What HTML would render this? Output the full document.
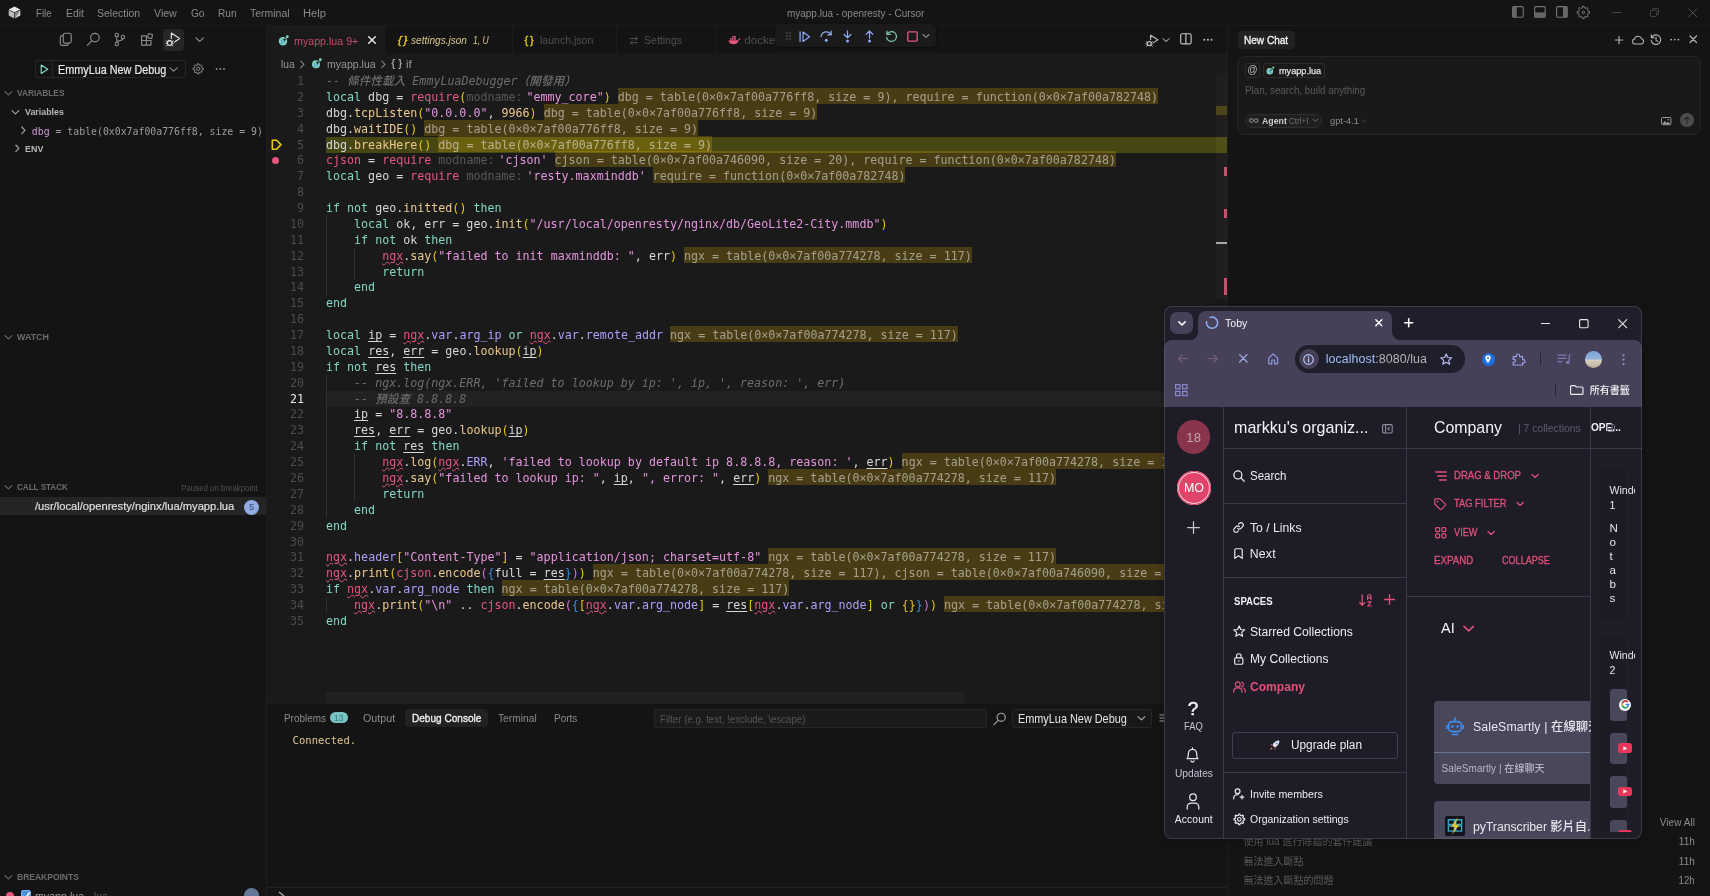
<!DOCTYPE html>
<html lang="zh-Hant"><head><meta charset="utf-8"><title>myapp.lua - openresty - Cursor</title>
<style>
*{box-sizing:border-box;margin:0;padding:0}
html,body{width:1710px;height:896px;overflow:hidden;background:#141414}
body{font-family:"Liberation Sans","Noto Sans CJK TC",sans-serif;font-size:11.7px;color:#8c8c8c;position:relative}
.a{position:absolute;white-space:nowrap}
.t{position:absolute;white-space:nowrap;line-height:16px;transform:translateY(-50%)}
svg{position:absolute;overflow:visible}
.mono{font-family:"DejaVu Sans Mono","Liberation Mono","Noto Sans CJK TC",monospace}
/* code */
#code{position:absolute;left:0;top:0;width:1227px;height:703px;overflow:hidden}
.ln{position:absolute;left:326px;height:15.88px;line-height:15.88px;white-space:pre;font-family:"DejaVu Sans Mono","Liberation Mono","Noto Sans CJK TC",monospace;font-size:11.66px;color:#d6d6dd;letter-spacing:0}
.num{position:absolute;left:268px;width:36px;text-align:right;height:15.88px;line-height:15.88px;font-family:"DejaVu Sans Mono","Liberation Mono",monospace;font-size:11.66px;color:#4c4b51}
.k{color:#83d6c5}.g{color:#e5567f}.gw{color:#e5567f;text-decoration:underline wavy #e5567f .75px;text-underline-offset:1.2px}
.f{color:#ebc88d}.s{color:#e394dc}.n{color:#ebc88d}.p{color:#aaa0fa}
.c{color:#6d6d6d;font-style:italic;font-weight:500}
.u{text-decoration:underline;text-underline-offset:2px;text-decoration-thickness:1px}
.h{display:inline-block;width:60.1px;color:#585858}
.b1{color:#e6c619}.b2{color:#d670d6}.b3{color:#2f8fe6}
.iv{background:rgba(255,200,0,.2);color:rgba(255,255,255,.5);padding:2px 0 0}
.ig{position:absolute;width:1px;background:#303030}
#root{position:absolute;left:0;top:0;width:1710px;height:896px;will-change:transform}
</style></head><body><div id="root">
<!-- backgrounds -->
<div class="a" style="left:267px;top:26px;width:960px;height:677px;background:#1a1a1a"></div>
<div class="a" style="left:266px;top:26px;width:1px;height:870px;background:#1d1d1d"></div>
<div class="a" style="left:1227px;top:26px;width:1px;height:870px;background:#1d1d1d"></div>
<div class="a" style="left:0;top:25px;width:1710px;height:1px;background:#1b1b1b"></div>
<!-- tab strip -->
<div class="a" style="left:384px;top:26px;width:843px;height:27px;background:#141414"></div>
<div class="a" style="left:384px;top:26px;width:1px;height:27px;background:#1b1b1b"></div>
<div class="a" style="left:512px;top:26px;width:1px;height:27px;background:#1b1b1b"></div>
<div class="a" style="left:616px;top:26px;width:1px;height:27px;background:#1b1b1b"></div>
<div class="a" style="left:716px;top:26px;width:1px;height:27px;background:#1b1b1b"></div>
<!-- bottom panel -->
<div class="a" style="left:267px;top:703px;width:960px;height:193px;background:#141414"></div>
<div class="a" style="left:267px;top:703px;width:960px;height:1px;background:#1d1d1d"></div>
<div id="code">
<div class="a" style="left:326px;top:136.52px;width:901px;height:16.4px;background:rgba(255,255,0,.2)"></div>
<div class="a" style="left:326px;top:390.90px;width:890px;height:16px;background:#222222"></div>
<div class="ig" style="left:326px;top:216.22px;height:79.40px"></div>
<div class="ig" style="left:354px;top:247.98px;height:31.76px"></div>
<div class="ig" style="left:326px;top:375.02px;height:142.92px"></div>
<div class="ig" style="left:354px;top:454.42px;height:47.64px"></div>
<div class="ig" style="left:326px;top:597.34px;height:15.88px"></div>
<div class="num" style="top:74.00px">1</div>
<div class="ln" style="top:74.00px"><span class="c">-- 條件性載入 EmmyLuaDebugger（開發用）</span></div>
<div class="num" style="top:89.88px">2</div>
<div class="ln" style="top:89.88px"><span class="k">local</span> dbg = <span class="g">require</span><span class="b1">(</span><span class="h">modname:</span><span class="s">"emmy_core"</span><span class="b1">)</span> <span class="iv">dbg = table(0×0×7af00a776ff8, size = 9), require = function(0×0×7af00a782748)</span></div>
<div class="num" style="top:105.76px">3</div>
<div class="ln" style="top:105.76px">dbg.<span class="f">tcpListen</span><span class="b1">(</span><span class="s">"0.0.0.0"</span>, <span class="n">9966</span><span class="b1">)</span> <span class="iv">dbg = table(0×0×7af00a776ff8, size = 9)</span></div>
<div class="num" style="top:121.64px">4</div>
<div class="ln" style="top:121.64px">dbg.<span class="f">waitIDE</span><span class="b1">()</span> <span class="iv">dbg = table(0×0×7af00a776ff8, size = 9)</span></div>
<div class="num" style="top:137.52px">5</div>
<div class="ln" style="top:137.52px">dbg.<span class="f">breakHere</span><span class="b1">()</span> <span class="iv">dbg = table(0×0×7af00a776ff8, size = 9)</span></div>
<div class="num" style="top:153.40px">6</div>
<div class="ln" style="top:153.40px"><span class="g">cjson</span> = <span class="g">require</span> <span class="h">modname:</span><span class="s">'cjson'</span> <span class="iv">cjson = table(0×0×7af00a746090, size = 20), require = function(0×0×7af00a782748)</span></div>
<div class="num" style="top:169.28px">7</div>
<div class="ln" style="top:169.28px"><span class="k">local</span> geo = <span class="g">require</span> <span class="h">modname:</span><span class="s">'resty.maxminddb'</span> <span class="iv">require = function(0×0×7af00a782748)</span></div>
<div class="num" style="top:185.16px">8</div>
<div class="num" style="top:201.04px">9</div>
<div class="ln" style="top:201.04px"><span class="k">if</span> <span class="k">not</span> geo.<span class="f">initted</span><span class="b1">()</span> <span class="k">then</span></div>
<div class="num" style="top:216.92px">10</div>
<div class="ln" style="top:216.92px">    <span class="k">local</span> ok, err = geo.<span class="f">init</span><span class="b1">(</span><span class="s">"/usr/local/openresty/nginx/db/GeoLite2-City.mmdb"</span><span class="b1">)</span></div>
<div class="num" style="top:232.80px">11</div>
<div class="ln" style="top:232.80px">    <span class="k">if</span> <span class="k">not</span> ok <span class="k">then</span></div>
<div class="num" style="top:248.68px">12</div>
<div class="ln" style="top:248.68px">        <span class="gw">ngx</span>.<span class="f">say</span><span class="b1">(</span><span class="s">"failed to init maxminddb: "</span>, err<span class="b1">)</span> <span class="iv">ngx = table(0×0×7af00a774278, size = 117)</span></div>
<div class="num" style="top:264.56px">13</div>
<div class="ln" style="top:264.56px">        <span class="k">return</span></div>
<div class="num" style="top:280.44px">14</div>
<div class="ln" style="top:280.44px">    <span class="k">end</span></div>
<div class="num" style="top:296.32px">15</div>
<div class="ln" style="top:296.32px"><span class="k">end</span></div>
<div class="num" style="top:312.20px">16</div>
<div class="num" style="top:328.08px">17</div>
<div class="ln" style="top:328.08px"><span class="k">local</span> <span class="u">ip</span> = <span class="gw">ngx</span>.<span class="p">var</span>.<span class="p">arg_ip</span> <span class="k">or</span> <span class="gw">ngx</span>.<span class="p">var</span>.<span class="p">remote_addr</span> <span class="iv">ngx = table(0×0×7af00a774278, size = 117)</span></div>
<div class="num" style="top:343.96px">18</div>
<div class="ln" style="top:343.96px"><span class="k">local</span> <span class="u">res</span>, <span class="u">err</span> = geo.<span class="f">lookup</span><span class="b1">(</span><span class="u">ip</span><span class="b1">)</span></div>
<div class="num" style="top:359.84px">19</div>
<div class="ln" style="top:359.84px"><span class="k">if</span> <span class="k">not</span> <span class="u">res</span> <span class="k">then</span></div>
<div class="num" style="top:375.72px">20</div>
<div class="ln" style="top:375.72px">    <span class="c">-- ngx.log(ngx.ERR, 'failed to lookup by ip: ', ip, ', reason: ', err)</span></div>
<div class="num" style="top:391.60px;color:#e8e8e8">21</div>
<div class="ln" style="top:391.60px">    <span class="c">-- 預設查 8.8.8.8</span></div>
<div class="num" style="top:407.48px">22</div>
<div class="ln" style="top:407.48px">    <span class="u">ip</span> = <span class="s">"8.8.8.8"</span></div>
<div class="num" style="top:423.36px">23</div>
<div class="ln" style="top:423.36px">    <span class="u">res</span>, <span class="u">err</span> = geo.<span class="f">lookup</span><span class="b1">(</span><span class="u">ip</span><span class="b1">)</span></div>
<div class="num" style="top:439.24px">24</div>
<div class="ln" style="top:439.24px">    <span class="k">if</span> <span class="k">not</span> <span class="u">res</span> <span class="k">then</span></div>
<div class="num" style="top:455.12px">25</div>
<div class="ln" style="top:455.12px">        <span class="gw">ngx</span>.<span class="f">log</span><span class="b1">(</span><span class="gw">ngx</span>.<span class="p">ERR</span>, <span class="s">'failed to lookup by default ip 8.8.8.8, reason: '</span>, <span class="u">err</span><span class="b1">)</span> <span class="iv">ngx = table(0×0×7af00a774278, size = 117)</span></div>
<div class="num" style="top:471.00px">26</div>
<div class="ln" style="top:471.00px">        <span class="gw">ngx</span>.<span class="f">say</span><span class="b1">(</span><span class="s">"failed to lookup ip: "</span>, <span class="u">ip</span>, <span class="s">", error: "</span>, <span class="u">err</span><span class="b1">)</span> <span class="iv">ngx = table(0×0×7af00a774278, size = 117)</span></div>
<div class="num" style="top:486.88px">27</div>
<div class="ln" style="top:486.88px">        <span class="k">return</span></div>
<div class="num" style="top:502.76px">28</div>
<div class="ln" style="top:502.76px">    <span class="k">end</span></div>
<div class="num" style="top:518.64px">29</div>
<div class="ln" style="top:518.64px"><span class="k">end</span></div>
<div class="num" style="top:534.52px">30</div>
<div class="num" style="top:550.40px">31</div>
<div class="ln" style="top:550.40px"><span class="gw">ngx</span>.<span class="p">header</span><span class="b1">[</span><span class="s">"Content-Type"</span><span class="b1">]</span> = <span class="s">"application/json; charset=utf-8"</span> <span class="iv">ngx = table(0×0×7af00a774278, size = 117)</span></div>
<div class="num" style="top:566.28px">32</div>
<div class="ln" style="top:566.28px"><span class="gw">ngx</span>.<span class="f">print</span><span class="b1">(</span><span class="g">cjson</span>.<span class="f">encode</span><span class="b2">(</span><span class="b3">{</span>full = <span class="u">res</span><span class="b3">}</span><span class="b2">)</span><span class="b1">)</span> <span class="iv">ngx = table(0×0×7af00a774278, size = 117), cjson = table(0×0×7af00a746090, size = 20)</span></div>
<div class="num" style="top:582.16px">33</div>
<div class="ln" style="top:582.16px"><span class="k">if</span> <span class="gw">ngx</span>.<span class="p">var</span>.<span class="p">arg_node</span> <span class="k">then</span> <span class="iv">ngx = table(0×0×7af00a774278, size = 117)</span></div>
<div class="num" style="top:598.04px">34</div>
<div class="ln" style="top:598.04px">    <span class="gw">ngx</span>.<span class="f">print</span><span class="b1">(</span><span class="s">"\n"</span> .. <span class="g">cjson</span>.<span class="f">encode</span><span class="b2">(</span><span class="b3">{</span><span class="b1">[</span><span class="gw">ngx</span>.<span class="p">var</span>.<span class="p">arg_node</span><span class="b1">]</span> = <span class="u">res</span><span class="b1">[</span><span class="gw">ngx</span>.<span class="p">var</span>.<span class="p">arg_node</span><span class="b1">]</span> <span class="k">or</span> <span class="b1">{}</span><span class="b3">}</span><span class="b2">)</span><span class="b1">)</span> <span class="iv">ngx = table(0×0×7af00a774278, size = 117), cjson = table(0×0×7af00a746090, size = 20)</span></div>
<div class="num" style="top:613.92px">35</div>
<div class="ln" style="top:613.92px"><span class="k">end</span></div>
</div>
<!-- titlebar + sidebar -->
<svg style="left:8px;top:6px;" width="13" height="13" viewBox="0 0 13 13" fill="none"><path d="M6.5 0.4 L12.3 3.4 L6.5 6.3 L0.7 3.4 Z" fill="#e8e8e8"/><path d="M0.7 3.9 L6.2 6.8 L6.2 12.6 L0.7 9.6 Z" fill="#b9b9b9"/><path d="M12.3 3.9 L6.8 6.8 L6.8 12.6 Z" fill="#8a8a8a"/><path d="M12.3 3.9 L12.3 9.6 L6.8 12.6 Z" fill="#d6d6d6"/></svg>
<div class="t" style="top:13.3px;font-size:11.7px;left:36.2px;color:#8a8a8a;transform-origin:0 50%;transform:translateY(-50%) scaleX(0.8274);">File</div>
<div class="t" style="top:13.3px;font-size:11.7px;left:65.5px;color:#8a8a8a;transform-origin:0 50%;transform:translateY(-50%) scaleX(0.8878);">Edit</div>
<div class="t" style="top:13.3px;font-size:11.7px;left:97.3px;color:#8a8a8a;transform-origin:0 50%;transform:translateY(-50%) scaleX(0.8975);">Selection</div>
<div class="t" style="top:13.3px;font-size:11.7px;left:154px;color:#8a8a8a;transform-origin:0 50%;transform:translateY(-50%) scaleX(0.9066);">View</div>
<div class="t" style="top:13.3px;font-size:11.7px;left:190.5px;color:#8a8a8a;transform-origin:0 50%;transform:translateY(-50%) scaleX(0.8650);">Go</div>
<div class="t" style="top:13.3px;font-size:11.7px;left:217.5px;color:#8a8a8a;transform-origin:0 50%;transform:translateY(-50%) scaleX(0.8619);">Run</div>
<div class="t" style="top:13.3px;font-size:11.7px;left:250.4px;color:#8a8a8a;transform-origin:0 50%;transform:translateY(-50%) scaleX(0.8956);">Terminal</div>
<div class="t" style="top:13.3px;font-size:11.7px;left:303px;color:#8a8a8a;transform-origin:0 50%;transform:translateY(-50%) scaleX(0.9558);">Help</div>
<div class="t" style="top:12.7px;font-size:11.7px;left:787px;color:#8a8a8a;transform-origin:0 50%;transform:translateY(-50%) scaleX(0.8526);">myapp.lua - openresty - Cursor</div>
<svg style="left:59px;top:32px;" width="14" height="15" viewBox="0 0 14 15" fill="none"><rect x="4.2" y="1.3" width="8" height="9.8" rx="1.8" stroke="#8c8c8c" stroke-width="1.1"/><path d="M4.2 3.6 H3 A1.7 1.7 0 0 0 1.3 5.3 V11.6 A1.8 1.8 0 0 0 3.1 13.4 H7.6 A1.7 1.7 0 0 0 9.3 11.7 V11.1" stroke="#8c8c8c" stroke-width="1.1"/></svg>
<svg style="left:86px;top:32px;" width="15" height="15" viewBox="0 0 15 15" fill="none"><circle cx="8.9" cy="5.6" r="4.3" stroke="#8c8c8c" stroke-width="1.15"/><path d="M5.9 8.7 L1.4 13.3" stroke="#8c8c8c" stroke-width="1.15" stroke-linecap="round"/></svg>
<svg style="left:113px;top:32px;" width="14" height="15" viewBox="0 0 14 15" fill="none"><circle cx="3.8" cy="3" r="1.7" stroke="#8c8c8c" stroke-width="1.1"/><circle cx="3.8" cy="12" r="1.7" stroke="#8c8c8c" stroke-width="1.1"/><circle cx="9.9" cy="5" r="1.7" stroke="#8c8c8c" stroke-width="1.1"/><path d="M3.8 4.7 V10.3 M9.9 6.7 C9.9 9.2 3.8 8 3.8 10.3" stroke="#8c8c8c" stroke-width="1.1"/></svg>
<svg style="left:140px;top:32px;" width="14" height="15" viewBox="0 0 14 15" fill="none"><path d="M1.6 3.9 H6.4 V13.1 H1.6 Z M1.6 8.5 H11 V13.1 H6.4 M11 8.5 V13.1 H6.4" stroke="#8c8c8c" stroke-width="1.1" stroke-linejoin="round"/><rect x="8" y="2" width="4.2" height="4.2" rx=".6" transform="rotate(12 10 4)" stroke="#8c8c8c" stroke-width="1.1"/></svg>
<div class="a" style="left:162.8px;top:29.2px;width:21.2px;height:21.5px;background:#262626;border-radius:4px;"></div>
<svg style="left:165px;top:31px;" width="17" height="17" viewBox="0 0 17 17" fill="none"><path d="M6.3 2.1 L14.6 7.6 L9.6 10.9 M6.3 2.1 V7.4" stroke="#e2e2e2" stroke-width="1.15" stroke-linejoin="round" stroke-linecap="round"/><circle cx="4.7" cy="12" r="2.3" stroke="#e2e2e2" stroke-width="1.2"/><path d="M1.2 10 L2.7 10.8 M8.2 10 L6.7 10.8 M1 12.4 H2.4 M8.4 12.4 H7 M1.4 14.9 L2.9 13.7 M8 14.9 L6.5 13.7 M3.6 9.3 L4.7 9.9 L5.8 9.3" stroke="#e2e2e2" stroke-width=".9" stroke-linecap="round"/></svg>
<svg style="left:195.1px;top:35.9px;" width="9.4" height="7.4" viewBox="0 0 9.4 7.4" fill="none"><path d="M1 1.85 L4.7 5.365 L8.4 1.85" stroke="#8c8c8c" stroke-width="1.15" stroke-linecap="round" stroke-linejoin="round"/></svg>
<div class="a" style="left:35.4px;top:60.2px;width:150.4px;height:18px;border:1px solid #272727;border-radius:2px;"></div>
<div class="a" style="left:52px;top:60.2px;width:1px;height:18px;background:#272727;"></div>
<svg style="left:40px;top:64px;" width="9" height="11" viewBox="0 0 9 11" fill="none"><path d="M1.2 1 L7.8 5.2 L1.2 9.5 Z" stroke="#83d6c5" stroke-width="1.15" stroke-linejoin="round"/></svg>
<div class="t" style="top:69.9px;font-size:11.9px;left:58px;color:#e6e6e6;transform-origin:0 50%;transform:translateY(-50%) scaleX(0.9105);-webkit-text-stroke:0.2px;">EmmyLua New Debug</div>
<svg style="left:169px;top:65.9px;" width="9.2" height="7.2" viewBox="0 0 9.2 7.2" fill="none"><path d="M1 1.8 L4.6 5.22 L8.2 1.8" stroke="#8c8c8c" stroke-width="1.1" stroke-linecap="round" stroke-linejoin="round"/></svg>
<svg style="left:191px;top:62px;" width="14" height="14" viewBox="0 0 14 14" fill="none"><path d="M12.26 6.14 L12.26 7.46 L11.11 7.53 L10.48 9.05 L11.24 9.91 L10.31 10.84 L9.45 10.08 L7.93 10.71 L7.86 11.86 L6.54 11.86 L6.47 10.71 L4.95 10.08 L4.09 10.84 L3.16 9.91 L3.92 9.05 L3.29 7.53 L2.14 7.46 L2.14 6.14 L3.29 6.07 L3.92 4.55 L3.16 3.69 L4.09 2.76 L4.95 3.52 L6.47 2.89 L6.54 1.74 L7.86 1.74 L7.93 2.89 L9.45 3.52 L10.31 2.76 L11.24 3.69 L10.48 4.55 L11.11 6.07 Z" stroke="#8c8c8c" stroke-width="1" stroke-linejoin="round"/><circle cx="7.2" cy="6.8" r="1.683" stroke="#8c8c8c" stroke-width="1"/></svg>
<svg style="left:215px;top:66px;" width="11" height="6" viewBox="0 0 11 6" fill="none"><circle cx="1.6" cy="3" r=".95" fill="#8c8c8c"/><circle cx="5.3" cy="3" r=".95" fill="#8c8c8c"/><circle cx="9" cy="3" r=".95" fill="#8c8c8c"/></svg>
<svg style="left:3.9px;top:89.6px;" width="8.8" height="6.8" viewBox="0 0 8.8 6.8" fill="none"><path d="M1 1.7 L4.4 4.93 L7.8 1.7" stroke="#6c6c6c" stroke-width="1.1" stroke-linecap="round" stroke-linejoin="round"/></svg>
<div class="t" style="top:92.8px;font-size:9.9px;left:17px;color:#6c6c6c;font-weight:700;transform-origin:0 50%;transform:translateY(-50%) scaleX(0.8429);">VARIABLES</div>
<svg style="left:11.4px;top:108.9px;" width="8.8" height="6.8" viewBox="0 0 8.8 6.8" fill="none"><path d="M1 1.7 L4.4 4.93 L7.8 1.7" stroke="#a8a8a8" stroke-width="1.1" stroke-linecap="round" stroke-linejoin="round"/></svg>
<div class="t" style="top:111.8px;font-size:9.9px;left:25px;color:#b8b8b8;font-weight:700;transform-origin:0 50%;transform:translateY(-50%) scaleX(0.8969);">Variables</div>
<svg style="left:20.3px;top:126.1px;" width="6.6" height="8.6" viewBox="0 0 6.6 8.6" fill="none"><path d="M1.815 1 L4.95 4.3 L1.815 7.6" stroke="#a8a8a8" stroke-width="1.1" stroke-linecap="round" stroke-linejoin="round"/></svg>
<div class="t mono" style="left:31.8px;top:131.5px;font-size:9.85px;color:#9d9d9d"><span style="color:#cf96d6">dbg</span> = table(0x0x7af00a776ff8, size = 9)</div>
<svg style="left:13.5px;top:144.1px;" width="6.6" height="8.6" viewBox="0 0 6.6 8.6" fill="none"><path d="M1.815 1 L4.95 4.3 L1.815 7.6" stroke="#a8a8a8" stroke-width="1.1" stroke-linecap="round" stroke-linejoin="round"/></svg>
<div class="t" style="top:148.9px;font-size:9.9px;left:25px;color:#b8b8b8;font-weight:700;transform-origin:0 50%;transform:translateY(-50%) scaleX(0.9039);">ENV</div>
<svg style="left:3.9px;top:334.1px;" width="8.8" height="6.8" viewBox="0 0 8.8 6.8" fill="none"><path d="M1 1.7 L4.4 4.93 L7.8 1.7" stroke="#6c6c6c" stroke-width="1.1" stroke-linecap="round" stroke-linejoin="round"/></svg>
<div class="t" style="top:337.3px;font-size:9.9px;left:17px;color:#6c6c6c;font-weight:700;transform-origin:0 50%;transform:translateY(-50%) scaleX(0.8999);">WATCH</div>
<svg style="left:3.9px;top:484.1px;" width="8.8" height="6.8" viewBox="0 0 8.8 6.8" fill="none"><path d="M1 1.7 L4.4 4.93 L7.8 1.7" stroke="#6c6c6c" stroke-width="1.1" stroke-linecap="round" stroke-linejoin="round"/></svg>
<div class="t" style="top:487.3px;font-size:9.9px;left:17px;color:#6c6c6c;font-weight:700;transform-origin:0 50%;transform:translateY(-50%) scaleX(0.8182);">CALL STACK</div>
<div class="t" style="top:488px;font-size:8.3px;right:1452.7px;color:#505050;transform-origin:100% 50%;transform:translateY(-50%) scaleX(0.9473);">Paused on breakpoint</div>
<div class="a" style="left:0px;top:497.2px;width:266px;height:18px;background:#252525;"></div>
<div class="t" style="top:506.3px;font-size:11.7px;left:35px;color:#e2e2e2;transform-origin:0 50%;transform:translateY(-50%) scaleX(0.9556);-webkit-text-stroke:0.15px;">/usr/local/openresty/nginx/lua/myapp.lua</div>
<div class="a" style="left:244px;top:499.6px;width:15px;height:15px;border-radius:8px;background:#92abe3"></div>
<div class="t" style="top:507.2px;font-size:9.3px;left:249px;color:#34456a;">5</div>
<svg style="left:3.9px;top:873.8px;" width="8.8" height="6.8" viewBox="0 0 8.8 6.8" fill="none"><path d="M1 1.7 L4.4 4.93 L7.8 1.7" stroke="#6c6c6c" stroke-width="1.1" stroke-linecap="round" stroke-linejoin="round"/></svg>
<div class="t" style="top:877px;font-size:9.9px;left:17px;color:#6c6c6c;font-weight:700;transform-origin:0 50%;transform:translateY(-50%) scaleX(0.8604);">BREAKPOINTS</div>
<div class="a" style="left:5.8px;top:891.9px;width:8px;height:8px;border-radius:4px;background:#e5567f"></div>
<div class="a" style="left:20.7px;top:889.7px;width:10.8px;height:10.8px;border-radius:2px;background:#4a8fe0;border:1px solid #7ab0ee"></div>
<svg style="left:21.2px;top:890.6px;" width="10" height="8" viewBox="0 0 10 8" fill="none"><path d="M2 5 L4.3 7.5 L8.5 1.5" stroke="#fff" stroke-width="1.5"/></svg>
<div class="t" style="top:896px;font-size:11.7px;left:34.7px;color:#9a9a9a;transform-origin:0 50%;transform:translateY(-50%) scaleX(0.9114);">myapp.lua</div>
<div class="t" style="top:896.2px;font-size:10.8px;left:94px;color:#5c5c5c;transform-origin:0 50%;transform:translateY(-50%) scaleX(0.9436);">lua</div>
<div class="a" style="left:243.8px;top:888px;width:15.4px;height:15.4px;border-radius:8px;background:#66779a"></div>
<!-- editor chrome -->
<svg style="left:277.3px;top:34px;" width="14" height="14" viewBox="0 0 14 14" fill="none"><circle cx="6" cy="7.3" r="4.2" fill="#7fd3c0"/><circle cx="10.3" cy="2.8" r="1.45" fill="#7fd3c0"/><circle cx="7.6" cy="5.6" r="1.2" fill="#1a1a1a"/><circle cx="4.6" cy="7" r=".7" fill="#3a6fd6"/><circle cx="6.4" cy="8.6" r=".7" fill="#3a6fd6"/><circle cx="4.4" cy="9.4" r=".6" fill="#3a6fd6"/><circle cx="7.8" cy="7.4" r=".55" fill="#3a6fd6"/><circle cx="6" cy="5" r=".5" fill="#3a6fd6"/></svg>
<div class="t" style="top:40.8px;font-size:11.7px;left:294.3px;color:#c64e6a;transform-origin:0 50%;transform:translateY(-50%) scaleX(0.9125);">myapp.lua 9+</div>
<svg style="left:368px;top:36px;" width="8" height="8" viewBox="0 0 8 8" fill="none"><path d="M.7 .7 L7.3 7.3 M7.3 .7 L.7 7.3" stroke="#f0f0f0" stroke-width="1.35" stroke-linecap="round"/></svg>
<div class="t" style="top:40.3px;font-size:11px;left:398px;color:#f0d21e;letter-spacing:2.052px;-webkit-text-stroke:0.35px;font-style:italic;">{}</div>
<div class="t" style="top:40.4px;font-size:11.7px;left:410.9px;color:#d9c68c;font-style:italic;transform-origin:0 50%;transform:translateY(-50%) scaleX(0.8611);">settings.json</div>
<div class="t" style="top:40.4px;font-size:11.7px;left:472.9px;color:#d9c68c;font-style:italic;transform-origin:0 50%;transform:translateY(-50%) scaleX(0.7317);">1, U</div>
<div class="t" style="top:40.3px;font-size:11px;left:524.4px;color:#e6c81e;letter-spacing:2.052px;-webkit-text-stroke:0.35px;">{}</div>
<div class="t" style="top:40.4px;font-size:11.7px;left:539.6px;color:#505050;transform-origin:0 50%;transform:translateY(-50%) scaleX(0.9004);">launch.json</div>
<svg style="left:629px;top:35.5px;" width="10" height="9" viewBox="0 0 10 9" fill="none"><path d="M1 2.5 H8.5 M6.3 .6 L8.5 2.5 L6.3 4.4 M9 6.7 H1.5 M3.7 4.8 L1.5 6.7 L3.7 8.6" stroke="#505050" stroke-width="1"/></svg>
<div class="t" style="top:40.4px;font-size:11.7px;left:644.1px;color:#505050;transform-origin:0 50%;transform:translateY(-50%) scaleX(0.9012);">Settings</div>
<svg style="left:727.5px;top:34.5px;" width="13" height="10" viewBox="0 0 13 10" fill="none"><path d="M.6 5.2 H9.6 C10.2 5.2 10.7 4.5 10.6 3.7 C11.4 3.2 12.2 3.6 12.6 4.2 C12 4.7 11.3 5.2 10.6 5.3 C10.2 7.8 8.3 9.3 5.5 9.3 C2.6 9.3 .8 7.8 .6 5.2 Z" fill="#e5567f"/><rect x="2" y="3.1" width="1.7" height="1.6" fill="#e5567f"/><rect x="4.1" y="3.1" width="1.7" height="1.6" fill="#e5567f"/><rect x="6.2" y="3.1" width="1.7" height="1.6" fill="#e5567f"/><rect x="4.1" y="1" width="1.7" height="1.6" fill="#e5567f"/><rect x="6.2" y="1" width="1.7" height="1.6" fill="#e5567f"/></svg>
<div class="t" style="top:40.4px;font-size:11.7px;left:744.2px;color:#505050;">docker-compose.yml</div>
<div class="a" style="left:775.3px;top:24.3px;width:161.2px;height:22.8px;background:#1a1a1a;border-radius:5px;box-shadow:0 1px 3px rgba(0,0,0,.5);"></div>
<svg style="left:785.7px;top:32px;" width="6" height="9" viewBox="0 0 6 9" fill="none"><circle cx="1" cy="1" r=".8" fill="#666069"/><circle cx="1" cy="4" r=".8" fill="#666069"/><circle cx="1" cy="7" r=".8" fill="#666069"/><circle cx="4" cy="1" r=".8" fill="#666069"/><circle cx="4" cy="4" r=".8" fill="#666069"/><circle cx="4" cy="7" r=".8" fill="#666069"/></svg>
<svg style="left:798.5px;top:30.5px;" width="12" height="12" viewBox="0 0 12 12" fill="none"><path d="M1.1 .8 V10.6" stroke="#8da8f2" stroke-width="1.3" stroke-linecap="round"/><path d="M4 1 L10.6 5.7 L4 10.4 Z" stroke="#8da8f2" stroke-width="1.2" stroke-linejoin="round"/></svg>
<svg style="left:819.5px;top:30px;" width="13" height="13" viewBox="0 0 13 13" fill="none"><path d="M1 6.6 C1.6 3.4 4 1.8 6.4 1.8 C8.3 1.8 9.9 2.8 10.9 4.6 M11.2 1.2 V4.8 H7.7" stroke="#8da8f2" stroke-width="1.25" stroke-linecap="round" stroke-linejoin="round"/><circle cx="6.3" cy="10.3" r="1.5" fill="#8da8f2"/></svg>
<svg style="left:842px;top:30px;" width="11" height="13" viewBox="0 0 11 13" fill="none"><path d="M5.5 .8 V7.6 M2.1 4.5 L5.5 7.8 L8.9 4.5" stroke="#8da8f2" stroke-width="1.25" stroke-linecap="round" stroke-linejoin="round"/><circle cx="5.5" cy="11" r="1.5" fill="#8da8f2"/></svg>
<svg style="left:863.5px;top:30px;" width="11" height="13" viewBox="0 0 11 13" fill="none"><path d="M5.5 8 V1.2 M2.1 4.4 L5.5 1 L8.9 4.4" stroke="#8da8f2" stroke-width="1.25" stroke-linecap="round" stroke-linejoin="round"/><circle cx="5.5" cy="11" r="1.5" fill="#8da8f2"/></svg>
<svg style="left:884.5px;top:30px;" width="13" height="13" viewBox="0 0 13 13" fill="none"><path d="M2.2 4.1 C3.1 2.5 4.7 1.6 6.5 1.6 A4.9 4.9 0 1 1 1.7 7.3 M1.9 1 V4.4 H5.3" stroke="#7ccab4" stroke-width="1.25" stroke-linecap="round" stroke-linejoin="round"/></svg>
<svg style="left:907px;top:30.6px;" width="11" height="11" viewBox="0 0 11 11" fill="none"><rect x=".8" y=".8" width="9.4" height="9.4" rx="1" stroke="#e5567f" stroke-width="1.3"/></svg>
<svg style="left:922px;top:33.3px;" width="8" height="6" viewBox="0 0 8 6" fill="none"><path d="M1 1.5 L4 4.35 L7 1.5" stroke="#8c8c8c" stroke-width="1.1" stroke-linecap="round" stroke-linejoin="round"/></svg>
<svg style="left:1145px;top:33.5px;" width="15" height="14" viewBox="0 0 15 14" fill="none"><path d="M5.6 1.2 L12.8 5.8 L8.6 8.6 M5.6 1.2 V5.6" stroke="#c4c4c4" stroke-width="1.1" stroke-linejoin="round" stroke-linecap="round"/><circle cx="4.3" cy="9.6" r="2" stroke="#c4c4c4" stroke-width="1.1"/><path d="M1.1 7.8 L2.5 8.6 M7.5 7.8 L6.1 8.6 M.9 10 H2.3 M7.7 10 H6.3 M1.3 12.3 L2.7 11.2 M7.3 12.3 L5.9 11.2" stroke="#c4c4c4" stroke-width=".85" stroke-linecap="round"/></svg>
<svg style="left:1162.2px;top:36.6px;" width="8.2" height="6.2" viewBox="0 0 8.2 6.2" fill="none"><path d="M1 1.55 L4.1 4.495 L7.2 1.55" stroke="#8c8c8c" stroke-width="1.1" stroke-linecap="round" stroke-linejoin="round"/></svg>
<svg style="left:1180.3px;top:33.4px;" width="12" height="12" viewBox="0 0 12 12" fill="none"><rect x=".7" y=".7" width="10.4" height="10.2" rx="1.5" stroke="#c4c4c4" stroke-width="1.15"/><path d="M5.9 .7 V10.9" stroke="#c4c4c4" stroke-width="1.15"/></svg>
<svg style="left:1203px;top:37px;" width="11" height="6" viewBox="0 0 11 6" fill="none"><circle cx="1.3" cy="2.8" r=".95" fill="#c4c4c4"/><circle cx="4.9" cy="2.8" r=".95" fill="#c4c4c4"/><circle cx="8.5" cy="2.8" r=".95" fill="#c4c4c4"/></svg>
<div class="t" style="top:63.6px;font-size:11.7px;left:280.6px;color:#969696;transform-origin:0 50%;transform:translateY(-50%) scaleX(0.8774);">lua</div>
<svg style="left:299.3px;top:59.5px;" width="6.6" height="8.6" viewBox="0 0 6.6 8.6" fill="none"><path d="M1.815 1 L4.95 4.3 L1.815 7.6" stroke="#8a8a8a" stroke-width="1.05" stroke-linecap="round" stroke-linejoin="round"/></svg>
<svg style="left:310px;top:56.6px;" width="14" height="14" viewBox="0 0 14 14" fill="none"><circle cx="6" cy="7.3" r="4" fill="#7fd3c0"/><circle cx="10.3" cy="2.8" r="1.45" fill="#7fd3c0"/><circle cx="7.6" cy="5.6" r="1.2" fill="#1a1a1a"/><circle cx="4.6" cy="7" r=".7" fill="#3a6fd6"/><circle cx="6.4" cy="8.6" r=".7" fill="#3a6fd6"/><circle cx="4.4" cy="9.4" r=".6" fill="#3a6fd6"/><circle cx="7.8" cy="7.4" r=".55" fill="#3a6fd6"/><circle cx="6" cy="5" r=".5" fill="#3a6fd6"/></svg>
<div class="t" style="top:63.6px;font-size:11.7px;left:327.2px;color:#969696;transform-origin:0 50%;transform:translateY(-50%) scaleX(0.9021);">myapp.lua</div>
<svg style="left:380.4px;top:59.5px;" width="6.6" height="8.6" viewBox="0 0 6.6 8.6" fill="none"><path d="M1.815 1 L4.95 4.3 L1.815 7.6" stroke="#8a8a8a" stroke-width="1.05" stroke-linecap="round" stroke-linejoin="round"/></svg>
<div class="t" style="top:63.2px;font-size:11.7px;left:391.2px;color:#c8c8c8;letter-spacing:3.185px;">{}</div>
<div class="t" style="top:63.6px;font-size:11.7px;left:405.9px;color:#969696;transform-origin:0 50%;transform:translateY(-50%) scaleX(0.9915);">if</div>
<svg style="left:270.5px;top:138.8px;" width="11" height="12" viewBox="0 0 11 12" fill="none"><path d="M1.3 1.2 H5.6 L9.9 5.6 L5.6 10.3 H1.3 Z" stroke="#ecca10" stroke-width="1.6" stroke-linejoin="round"/></svg>
<div class="a" style="left:271.8px;top:156.9px;width:7.2px;height:7.2px;border-radius:4px;background:#e5567f"></div>
<div class="a" style="left:1216px;top:73px;width:11px;height:226px;background:#201f1e;"></div>
<div class="a" style="left:1216px;top:106px;width:11px;height:8.5px;background:#4b4519;"></div>
<div class="a" style="left:1216px;top:136.8px;width:11px;height:16px;background:#4f4f1a;"></div>
<div class="a" style="left:1224px;top:166.5px;width:2.5px;height:9.5px;background:#c4516c;"></div>
<div class="a" style="left:1224px;top:208.5px;width:2.5px;height:9.5px;background:#c4516c;"></div>
<div class="a" style="left:1224px;top:277.5px;width:2.5px;height:17.5px;background:#c4516c;"></div>
<div class="a" style="left:1216px;top:242.3px;width:10.5px;height:1.4px;background:#a8a8a8;"></div>
<div class="a" style="left:326px;top:692px;width:638px;height:10.5px;background:#212121;"></div>
<!-- panels -->
<svg style="left:1512.4px;top:6px;" width="12" height="12" viewBox="0 0 12 12" fill="none"><rect x=".6" y=".6" width="10.6" height="10.6" rx="1.3" stroke="#747474" stroke-width="1.1"/><rect x=".6" y=".6" width="4.2" height="10.6" fill="#666666"/></svg>
<svg style="left:1533.8px;top:6px;" width="12" height="12" viewBox="0 0 12 12" fill="none"><rect x=".6" y=".6" width="10.6" height="10.6" rx="1.3" stroke="#747474" stroke-width="1.1"/><rect x=".6" y="6.4" width="10.6" height="4.8" fill="#666666"/></svg>
<svg style="left:1556px;top:6px;" width="12" height="12" viewBox="0 0 12 12" fill="none"><rect x=".6" y=".6" width="10.6" height="10.6" rx="1.3" stroke="#747474" stroke-width="1.1"/><rect x="7" y=".6" width="4.2" height="10.6" fill="#666666"/></svg>
<svg style="left:1576px;top:5px;" width="15" height="15" viewBox="0 0 15 15" fill="none"><path d="M13.55 6.60 L13.55 8.20 L12.15 8.29 L11.39 10.13 L12.32 11.18 L11.18 12.32 L10.13 11.39 L8.29 12.15 L8.20 13.55 L6.60 13.55 L6.51 12.15 L4.67 11.39 L3.62 12.32 L2.48 11.18 L3.41 10.13 L2.65 8.29 L1.25 8.20 L1.25 6.60 L2.65 6.51 L3.41 4.67 L2.48 3.62 L3.62 2.48 L4.67 3.41 L6.51 2.65 L6.60 1.25 L8.20 1.25 L8.29 2.65 L10.13 3.41 L11.18 2.48 L12.32 3.62 L11.39 4.67 L12.15 6.51 Z" stroke="#808080" stroke-width="1" stroke-linejoin="round"/><circle cx="7.4" cy="7.4" r="1.24" stroke="#808080" stroke-width="1"/></svg>
<div class="a" style="left:1611.5px;top:11.6px;width:9.2px;height:1px;background:#454545;"></div>
<svg style="left:1649.5px;top:7.5px;" width="9" height="9" viewBox="0 0 9 9" fill="none"><rect x=".5" y="2.3" width="6.2" height="6.2" rx="1" stroke="#454545" stroke-width="1"/><path d="M2.4 2.3 V1.5 A1 1 0 0 1 3.4 .5 H7.5 A1 1 0 0 1 8.5 1.5 V5.6 A1 1 0 0 1 7.5 6.6 H6.7" stroke="#454545" stroke-width="1"/></svg>
<svg style="left:1687.5px;top:7.5px;" width="9.5" height="9.5" viewBox="0 0 9.5 9.5" fill="none"><path d="M.5 .5 L9 9 M9 .5 L.5 9" stroke="#505050" stroke-width="1"/></svg>
<div class="t" style="top:717.8px;font-size:11.7px;left:284.4px;color:#8c8c8c;transform-origin:0 50%;transform:translateY(-50%) scaleX(0.8479);">Problems</div>
<div class="a" style="left:330.1px;top:712.2px;width:17.5px;height:11px;background:#79c4c4;border-radius:5.5px;"></div>
<div class="t" style="top:717.8px;font-size:9.3px;left:334.2px;color:#3f7a80;transform-origin:0 50%;transform:translateY(-50%) scaleX(0.9087);">13</div>
<div class="t" style="top:717.8px;font-size:11.7px;left:362.7px;color:#8c8c8c;transform-origin:0 50%;transform:translateY(-50%) scaleX(0.9196);">Output</div>
<div class="a" style="left:405.3px;top:708.8px;width:82.7px;height:18px;background:#222222;border-radius:4px;"></div>
<div class="t" style="top:717.7px;font-size:11.7px;left:411.8px;color:#f0f0f0;transform-origin:0 50%;transform:translateY(-50%) scaleX(0.8617);-webkit-text-stroke:0.35px;">Debug Console</div>
<div class="t" style="top:717.8px;font-size:11.7px;left:498.1px;color:#8c8c8c;transform-origin:0 50%;transform:translateY(-50%) scaleX(0.8753);">Terminal</div>
<div class="t" style="top:717.8px;font-size:11.7px;left:553.7px;color:#8c8c8c;transform-origin:0 50%;transform:translateY(-50%) scaleX(0.8532);">Ports</div>
<div class="a" style="left:654.2px;top:708.8px;width:333.1px;height:19px;background:#1b1b1b;border:1px solid #262626;border-radius:2px;"></div>
<div class="t" style="top:719.3px;font-size:10.8px;left:659.6px;color:#555555;transform-origin:0 50%;transform:translateY(-50%) scaleX(0.8944);">Filter (e.g. text, !exclude, \escape)</div>
<svg style="left:993px;top:711.5px;" width="14" height="14" viewBox="0 0 14 14" fill="none"><circle cx="8.2" cy="5.3" r="4.1" stroke="#a4a4a4" stroke-width="1.15"/><path d="M5.3 8.3 L1 12.6" stroke="#a4a4a4" stroke-width="1.15" stroke-linecap="round"/></svg>
<div class="a" style="left:1011.6px;top:708.8px;width:140.6px;height:19px;background:#181818;border:1px solid #262626;border-radius:2px;"></div>
<div class="t" style="top:718.6px;font-size:11.9px;left:1018.3px;color:#e4e4e4;transform-origin:0 50%;transform:translateY(-50%) scaleX(0.9147);">EmmyLua New Debug</div>
<svg style="left:1137px;top:715.2px;" width="8.8" height="6.8" viewBox="0 0 8.8 6.8" fill="none"><path d="M1 1.7 L4.4 4.93 L7.8 1.7" stroke="#b0b0b0" stroke-width="1.1" stroke-linecap="round" stroke-linejoin="round"/></svg>
<svg style="left:1159px;top:713.5px;" width="8" height="10" viewBox="0 0 8 10" fill="none"><path d="M.5 1 H8 M.5 4 H8 M.5 7 H8" stroke="#a0a0a0" stroke-width="1.1"/></svg>
<div class="t mono" style="left:292.6px;top:740.2px;font-size:10.55px;color:#e2c690">Connected.</div>
<div class="a" style="left:267px;top:887px;width:960px;height:1px;background:#222222;"></div>
<svg style="left:277.5px;top:891.4px;" width="8" height="10" viewBox="0 0 8 10" fill="none"><path d="M1 1 L6.5 5.5 L1 10" stroke="#b0b0b0" stroke-width="1.2"/></svg>
<div class="a" style="left:1237.9px;top:31px;width:56.8px;height:17.6px;background:#222222;border-radius:4px;"></div>
<div class="t" style="top:39.8px;font-size:11.7px;left:1244.2px;color:#f2f2f2;transform-origin:0 50%;transform:translateY(-50%) scaleX(0.8604);-webkit-text-stroke:0.35px;">New Chat</div>
<svg style="left:1614.2px;top:34.5px;" width="10" height="10" viewBox="0 0 10 10" fill="none"><path d="M5 1.3 V8.7 M1.3 5 H8.7" stroke="#b9b1b9" stroke-width="1.1" stroke-linecap="round"/></svg>
<svg style="left:1631px;top:34.5px;" width="14" height="10" viewBox="0 0 14 10" fill="none"><path d="M3.6 9 H10.2 A2.7 2.7 0 0 0 10.6 3.7 A3.7 3.7 0 0 0 3.6 3.9 A2.6 2.6 0 0 0 3.6 9 Z" stroke="#b9b1b9" stroke-width="1.1" stroke-linejoin="round"/></svg>
<svg style="left:1650px;top:34px;" width="12" height="12" viewBox="0 0 12 12" fill="none"><path d="M1.7 3.4 A4.8 4.8 0 1 1 1.2 6.4 M1.3 .9 V3.7 H4.1" stroke="#b9b1b9" stroke-width="1.1" stroke-linecap="round" stroke-linejoin="round"/><path d="M6 3.3 V6.2 L7.9 7.4" stroke="#b9b1b9" stroke-width="1.1" stroke-linecap="round"/></svg>
<svg style="left:1669.6px;top:37px;" width="11" height="6" viewBox="0 0 11 6" fill="none"><circle cx="1.2" cy="2.6" r=".9" fill="#b9b1b9"/><circle cx="4.8" cy="2.6" r=".9" fill="#b9b1b9"/><circle cx="8.4" cy="2.6" r=".9" fill="#b9b1b9"/></svg>
<svg style="left:1689.4px;top:35.3px;" width="8.5" height="8.5" viewBox="0 0 8.5 8.5" fill="none"><path d="M1 1 L7.5 7.5 M7.5 1 L1 7.5" stroke="#b9b1b9" stroke-width="1.2" stroke-linecap="round"/></svg>
<div class="a" style="left:1237.3px;top:55.6px;width:463.7px;height:79.5px;background:#191919;border:1px solid #252525;border-radius:7px;"></div>
<div class="a" style="left:1244.9px;top:63.2px;width:14.7px;height:14.4px;border:1px solid #2c2c2c;border-radius:3px;"></div>
<div class="t" style="top:69.6px;font-size:10.2px;left:1247.3px;color:#b8b8b8;">@</div>
<div class="a" style="left:1263.2px;top:63.2px;width:61.5px;height:14.4px;border:1px solid #2c2c2c;border-radius:3px;"></div>
<svg style="left:1266.3px;top:65.8px;" width="9" height="9" viewBox="0 0 9 9" fill="none"><circle cx="3.8" cy="5.2" r="3.3" fill="#7fd3c0"/><circle cx="7.3" cy="1.6" r="1.1" fill="#7fd3c0"/><circle cx="3" cy="5" r=".7" fill="#3a6fd6"/><circle cx="4.6" cy="6.3" r=".7" fill="#3a6fd6"/><circle cx="5" cy="4" r=".8" fill="#191919"/></svg>
<div class="t" style="top:70.9px;font-size:9.9px;left:1278.7px;color:#e2e2e2;transform-origin:0 50%;transform:translateY(-50%) scaleX(0.9261);-webkit-text-stroke:0.25px;">myapp.lua</div>
<div class="t" style="top:91.3px;font-size:10.2px;left:1244.9px;color:#5a5a5a;transform-origin:0 50%;transform:translateY(-50%) scaleX(0.9608);">Plan, search, build anything</div>
<div class="a" style="left:1244.9px;top:113.6px;width:76.7px;height:14.2px;background:#1f1f1f;border:1px solid #2e2e2e;border-radius:7.1px;"></div>
<svg style="left:1249.2px;top:118.3px;" width="10" height="5" viewBox="0 0 10 5" fill="none"><path d="M4.8 2.5 C3.9 1.3 3.2 .7 2.4 .7 A1.8 1.8 0 0 0 2.4 4.3 C3.2 4.3 3.9 3.7 4.8 2.5 C5.7 1.3 6.4 .7 7.2 .7 A1.8 1.8 0 0 1 7.2 4.3 C6.4 4.3 5.7 3.7 4.8 2.5 Z" stroke="#a4a4a4" stroke-width="1"/></svg>
<div class="t" style="top:120.9px;font-size:9.3px;left:1261.8px;color:#cccccc;font-weight:700;transform-origin:0 50%;transform:translateY(-50%) scaleX(0.9412);">Agent</div>
<div class="t" style="top:121.8px;font-size:8.2px;left:1289.4px;color:#707070;transform-origin:0 50%;transform:translateY(-50%) scaleX(0.9839);">Ctrl+I</div>
<svg style="left:1312px;top:117.9px;" width="6.8" height="4.8" viewBox="0 0 6.8 4.8" fill="none"><path d="M1 1.2 L3.4 3.48 L5.8 1.2" stroke="#707070" stroke-width="1" stroke-linecap="round" stroke-linejoin="round"/></svg>
<div class="t" style="top:121.3px;font-size:9.5px;left:1329.5px;color:#8c8c8c;transform-origin:0 50%;transform:translateY(-50%) scaleX(0.9805);">gpt-4.1</div>
<svg style="left:1360.8px;top:118.6px;" width="6.4" height="4.4" viewBox="0 0 6.4 4.4" fill="none"><path d="M1 1.1 L3.2 3.19 L5.4 1.1" stroke="#444444" stroke-width="1" stroke-linecap="round" stroke-linejoin="round"/></svg>
<svg style="left:1661.2px;top:116.6px;" width="10.5" height="8.5" viewBox="0 0 10.5 8.5" fill="none"><rect x=".5" y=".5" width="9.4" height="7.2" rx="1" stroke="#9a9a9a" stroke-width="1"/><path d="M1.2 6.9 L3.8 4.1 L5.6 5.9 L7 4.8 L9.2 6.9 Z" fill="#9a9a9a"/><circle cx="7.2" cy="2.7" r=".8" fill="#9a9a9a"/></svg>
<div class="a" style="left:1679.9px;top:113.4px;width:14px;height:14px;border-radius:7px;background:#4c4c4c"></div>
<svg style="left:1683px;top:116.4px;" width="8" height="8" viewBox="0 0 8 8" fill="none"><path d="M4 7.3 V.9 M1.2 3.6 L4 .8 L6.8 3.6" stroke="#2a2a2a" stroke-width="1.1" stroke-linecap="round" stroke-linejoin="round"/></svg>
<div class="t" style="top:823.1px;font-size:10px;right:15px;color:#8c8c8c;letter-spacing:0.052px;">View All</div>
<div class="t" style="top:842.2px;font-size:10px;left:1243.5px;color:#5c5c5c;">使用 lua 進行除錯的套件建議</div>
<div class="t" style="top:842.2px;font-size:10px;right:15px;color:#8c8c8c;letter-spacing:0.079px;">11h</div>
<div class="t" style="top:861.6px;font-size:10px;left:1243.5px;color:#5c5c5c;">無法進入斷點</div>
<div class="t" style="top:861.6px;font-size:10px;right:15px;color:#8c8c8c;letter-spacing:0.079px;">11h</div>
<div class="t" style="top:881.2px;font-size:10px;left:1243.5px;color:#5c5c5c;">無法進入斷點的問題</div>
<div class="t" style="top:881.2px;font-size:10px;right:15px;color:#8c8c8c;transform-origin:100% 50%;transform:translateY(-50%) scaleX(0.9649);">12h</div>
<!-- toby browser window -->
<div class="a" style="left:1164.3px;top:306.4px;width:477.3px;height:533px;border-radius:8px;overflow:hidden;background:#1d1c27;box-shadow:0 2px 10px rgba(0,0,0,.25)"><div class="a" style="left:-1164.3px;top:-306.4px;width:1710px;height:896px">
<div class="a" style="left:1164.3px;top:306.4px;width:477.3px;height:34.5px;background:#1f1e2b;"></div>
<div class="a" style="left:1169.9px;top:311.9px;width:23.2px;height:22.3px;background:#464159;border-radius:7px;"></div>
<svg style="left:1177.7px;top:320.6px;" width="8" height="5" viewBox="0 0 8 5" fill="none"><path d="M.9 .9 L4 4 L7.1 .9" stroke="#fff" stroke-width="1.5" stroke-linecap="round" stroke-linejoin="round"/></svg>
<div class="a" style="left:1198px;top:311.4px;width:193.9px;height:30px;background:#464159;border-radius:8px 8px 0 0;"></div>
<svg style="left:1190px;top:332.4px;" width="8" height="8" viewBox="0 0 8 8" fill="none"><path d="M8 0 V8 H0 A8 8 0 0 0 8 0 Z" fill="#464159"/></svg>
<svg style="left:1391.9px;top:332.4px;" width="8" height="8" viewBox="0 0 8 8" fill="none"><path d="M0 0 V8 H8 A8 8 0 0 1 0 0 Z" fill="#464159"/></svg>
<svg style="left:1205px;top:316px;" width="14" height="14" viewBox="0 0 14 14" fill="none"><path d="M5.2 1.4 A5.6 5.6 0 1 1 1.6 5.4" stroke="#8fb0f2" stroke-width="1.5" stroke-linecap="round"/></svg>
<div class="t" style="top:322.6px;font-size:11.4px;left:1225px;color:#f4f4f4;transform-origin:0 50%;transform:translateY(-50%) scaleX(0.9302);">Toby</div>
<svg style="left:1374.7px;top:319.2px;" width="7.6" height="7.6" viewBox="0 0 7.6 7.6" fill="none"><path d="M.8 .8 L6.8 6.8 M6.8 .8 L.8 6.8" stroke="#fff" stroke-width="1.4" stroke-linecap="round"/></svg>
<svg style="left:1404.2px;top:318.3px;" width="9.4" height="9.4" viewBox="0 0 9.4 9.4" fill="none"><path d="M4.7 .7 V8.7 M.7 4.7 H8.7" stroke="#fff" stroke-width="1.6" stroke-linecap="round"/></svg>
<div class="a" style="left:1541.1px;top:323px;width:9.2px;height:1.1px;background:#e8e8e8;"></div>
<svg style="left:1579.2px;top:318.6px;" width="9.7" height="9.3" viewBox="0 0 9.7 9.3" fill="none"><rect x=".6" y=".6" width="8.5" height="8.1" rx="1.2" stroke="#e8e8e8" stroke-width="1.1"/></svg>
<svg style="left:1617.6px;top:318.5px;" width="9.4" height="9.4" viewBox="0 0 9.4 9.4" fill="none"><path d="M.6 .6 L8.8 8.8 M8.8 .6 L.6 8.8" stroke="#e8e8e8" stroke-width="1.1" stroke-linecap="round"/></svg>
<div class="a" style="left:1164.3px;top:340.3px;width:477.3px;height:66.6px;background:#464159;border-radius:8px 8px 0 0;"></div>
<svg style="left:1178px;top:354px;" width="10" height="9" viewBox="0 0 10 9" fill="none"><path d="M9.6 4.5 H.8 M4.4 .8 L.7 4.5 L4.4 8.2" stroke="#7a5d80" stroke-width="1.1" stroke-linecap="round" stroke-linejoin="round"/></svg>
<svg style="left:1207.8px;top:354px;" width="10" height="9" viewBox="0 0 10 9" fill="none"><path d="M.4 4.5 H9.2 M5.6 .8 L9.3 4.5 L5.6 8.2" stroke="#7a5d80" stroke-width="1.1" stroke-linecap="round" stroke-linejoin="round"/></svg>
<svg style="left:1238.8px;top:354.2px;" width="8.6" height="8.6" viewBox="0 0 8.6 8.6" fill="none"><path d="M.6 .6 L8 8 M8 .6 L.6 8" stroke="#a3b1ea" stroke-width="1.2" stroke-linecap="round"/></svg>
<svg style="left:1268px;top:353px;" width="10.4" height="11.6" viewBox="0 0 10.4 11.6" fill="none"><path d="M.8 5 L5.2 .9 L9.6 5 V10.8 H6.6 V7 H3.8 V10.8 H.8 Z" stroke="#8a9be0" stroke-width="1.2" stroke-linejoin="round"/></svg>
<div class="a" style="left:1295px;top:345.3px;width:169.5px;height:27.4px;background:#1f1e2b;border-radius:13.7px;"></div>
<div class="a" style="left:1298.9px;top:349.1px;width:19.8px;height:19.8px;border-radius:10px;background:#464159"></div>
<svg style="left:1303.2px;top:353.5px;" width="11" height="11" viewBox="0 0 11 11" fill="none"><circle cx="5.5" cy="5.5" r="4.8" stroke="#b9c3f5" stroke-width="1.2"/><path d="M5.5 5 V8" stroke="#b9c3f5" stroke-width="1.3" stroke-linecap="round"/><circle cx="5.5" cy="3.1" r=".8" fill="#b9c3f5"/></svg>
<div class="t" style="left:1325.7px;top:359.2px;font-size:12.4px;color:#b5b2b4;letter-spacing:.08px"><span style="color:#9fbff5">localhost</span>:8080/lua</div>
<svg style="left:1440px;top:353.2px;" width="12.4" height="12" viewBox="0 0 12.4 12" fill="none"><path d="M6.2 .9 L7.8 4.5 L11.6 4.9 L8.7 7.4 L9.6 11.2 L6.2 9.2 L2.8 11.2 L3.7 7.4 L.8 4.9 L4.6 4.5 Z" stroke="#b9c3f5" stroke-width="1.15" stroke-linejoin="round"/></svg>
<div class="a" style="left:1481.9px;top:352.8px;width:13px;height:13px;border-radius:7px;background:#1b6fe0"></div>
<svg style="left:1485.4px;top:355.2px;" width="6" height="8.4" viewBox="0 0 6 8.4" fill="none"><path d="M3 .3 A2.7 2.7 0 0 1 5.7 3 C5.7 4.8 3 8 3 8 C3 8 .3 4.8 .3 3 A2.7 2.7 0 0 1 3 .3 Z" fill="#fff"/><circle cx="3" cy="3" r="1" fill="#1b6fe0"/></svg>
<svg style="left:1511.9px;top:352.4px;" width="14" height="14" viewBox="0 0 14 14" fill="none"><path d="M1.2 4.6 H4.4 V3.6 A1.6 1.6 0 0 1 7.6 3.6 V4.6 H10.6 V7.6 H11.4 A1.6 1.6 0 0 1 11.4 10.8 H10.6 V13 H1.2 V10.3 H2 A1.5 1.5 0 0 0 2 7.3 H1.2 Z" stroke="#9aa2e6" stroke-width="1.15" stroke-linejoin="round"/></svg>
<div class="a" style="left:1540px;top:353px;width:1.2px;height:12.4px;background:#272636;"></div>
<svg style="left:1556.8px;top:353.5px;" width="14" height="11" viewBox="0 0 14 11" fill="none"><path d="M.6 1.2 H9.6 M.6 4.4 H9.6 M.6 7.6 H5.4" stroke="#7d7cb8" stroke-width="1.2"/><path d="M12.2 1.2 V8" stroke="#7d7cb8" stroke-width="1.2"/><circle cx="10.7" cy="8.4" r="1.7" fill="#7d7cb8"/><path d="M12.2 1.2 H13.8" stroke="#7d7cb8" stroke-width="1.2"/></svg>
<div class="a" style="left:1584.5px;top:350.8px;width:17px;height:17px;border-radius:9px;overflow:hidden;background:linear-gradient(#7fa6d8 0,#8fb1dc 45%,#d8d0c0 55%,#b8ad98 100%)"></div>
<svg style="left:1622px;top:353.6px;" width="3" height="11.4" viewBox="0 0 3 11.4" fill="none"><circle cx="1.5" cy="1.3" r="1.15" fill="#8c8cd6"/><circle cx="1.5" cy="5.7" r="1.15" fill="#8c8cd6"/><circle cx="1.5" cy="10.1" r="1.15" fill="#8c8cd6"/></svg>
<svg style="left:1174.7px;top:383.9px;" width="12.8" height="12.4" viewBox="0 0 12.8 12.4" fill="none"><rect x=".6" y=".6" width="4.4" height="4.2" stroke="#8c8cd6" stroke-width="1.15"/><rect x="7.6" y=".6" width="4.4" height="4.2" stroke="#8c8cd6" stroke-width="1.15"/><rect x=".6" y="7.4" width="4.4" height="4.2" stroke="#8c8cd6" stroke-width="1.15"/><rect x="7.6" y="7.4" width="4.4" height="4.2" stroke="#8c8cd6" stroke-width="1.15"/></svg>
<div class="a" style="left:1555.2px;top:383.7px;width:1.2px;height:12.3px;background:#272636;"></div>
<svg style="left:1569.7px;top:385px;" width="13.6" height="10" viewBox="0 0 13.6 10" fill="none"><path d="M.6 1.6 A1 1 0 0 1 1.6 .6 H5 L6.4 2 H12 A1 1 0 0 1 13 3 V8.4 A1 1 0 0 1 12 9.4 H1.6 A1 1 0 0 1 .6 8.4 Z" stroke="#f0f0f0" stroke-width="1.1" stroke-linejoin="round"/></svg>
<div class="t" style="top:391px;font-size:10px;left:1589.8px;color:#f2f2f2;font-weight:500;">所有書籤</div>
<div class="a" style="left:1223.1px;top:406.5px;width:1px;height:433.5px;background:#3a3947;"></div>
<div class="a" style="left:1406px;top:406.5px;width:1px;height:433.5px;background:#3a3947;"></div>
<div class="a" style="left:1589.9px;top:406.5px;width:1px;height:433.5px;background:#3a3947;"></div>
<div class="a" style="left:1223.6px;top:448.4px;width:418.4px;height:1px;background:#3a3947;"></div>
<div class="a" style="left:1223.6px;top:502.8px;width:182.2px;height:1px;background:#3a3947;"></div>
<div class="a" style="left:1223.6px;top:576.5px;width:182.2px;height:1px;background:#3a3947;"></div>
<div class="a" style="left:1405.8px;top:595.6px;width:184.6px;height:1px;background:#3a3947;"></div>
<div class="a" style="left:1223.6px;top:771.9px;width:182.2px;height:1px;background:#3a3947;"></div>
<div class="a" style="left:1177.2px;top:420.4px;width:33.2px;height:33.2px;border-radius:17px;background:#88354b"></div>
<div class="t" style="top:437.6px;font-size:13px;left:1186.3px;color:#bda6ae;letter-spacing:0.140px;">18</div>
<div class="a" style="left:1176.6px;top:470.6px;width:34px;height:34px;border-radius:17px;background:#e0446a;box-shadow:inset 0 0 0 1.1px #e0446a,inset 0 0 0 2px #f6d3dc"></div>
<div class="t" style="top:487.8px;font-size:12.6px;left:1183.6px;color:#ffffff;transform-origin:0 50%;transform:translateY(-50%) scaleX(0.9854);">MO</div>
<svg style="left:1187.1px;top:521.3px;" width="13" height="13" viewBox="0 0 13 13" fill="none"><path d="M6.5 .6 V12.4 M.6 6.5 H12.4" stroke="#c6c6d0" stroke-width="1.25" stroke-linecap="round"/></svg>
<div class="t" style="top:709px;font-size:19px;left:1187.8px;color:#f2f2f6;-webkit-text-stroke:0.45px;">?</div>
<div class="t" style="top:727px;font-size:10.3px;left:1184.4px;color:#c4c4d0;transform-origin:0 50%;transform:translateY(-50%) scaleX(0.9124);">FAQ</div>
<svg style="left:1185.4px;top:746.6px;" width="15" height="16" viewBox="0 0 15 16" fill="none"><path d="M2 11.6 C3.4 10.4 3.4 9 3.4 6.4 A4.1 4.1 0 0 1 11.6 6.4 C11.6 9 11.6 10.4 13 11.6 Z M5.9 13.9 A1.7 1.7 0 0 0 9.1 13.9 M7.5 2.2 V.8" stroke="#e6e6ee" stroke-width="1.25" stroke-linejoin="round" stroke-linecap="round"/></svg>
<div class="t" style="top:773.8px;font-size:10.3px;left:1174.8px;color:#c4c4d0;transform-origin:0 50%;transform:translateY(-50%) scaleX(0.9879);">Updates</div>
<svg style="left:1185.9px;top:793.4px;" width="14" height="17" viewBox="0 0 14 17" fill="none"><circle cx="7" cy="4.2" r="3.3" stroke="#e6e6ee" stroke-width="1.25"/><path d="M1.2 16 V14 A4 4 0 0 1 5.2 10 H8.8 A4 4 0 0 1 12.8 14 V16" stroke="#e6e6ee" stroke-width="1.25" stroke-linecap="round"/></svg>
<div class="t" style="top:820.2px;font-size:10.3px;left:1174.8px;color:#eeeef4;letter-spacing:0.114px;">Account</div>
<div class="t" style="top:428.2px;font-size:17px;left:1233.9px;color:#f2f2f6;transform-origin:0 50%;transform:translateY(-50%) scaleX(0.9456);">markku's organiz...</div>
<svg style="left:1382px;top:423.8px;" width="10.8" height="9.6" viewBox="0 0 10.8 9.6" fill="none"><rect x=".6" y=".6" width="9.6" height="8.4" rx="1.2" stroke="#8e8ea4" stroke-width="1.1"/><path d="M3.6 .6 V9 M7.6 3.2 L5.8 4.8 L7.6 6.4" stroke="#8e8ea4" stroke-width="1.1"/></svg>
<svg style="left:1233.1px;top:470.2px;" width="12" height="12" viewBox="0 0 12 12" fill="none"><circle cx="4.9" cy="4.9" r="4" stroke="#ececf2" stroke-width="1.25"/><path d="M7.9 7.9 L11.2 11.2" stroke="#ececf2" stroke-width="1.25" stroke-linecap="round"/></svg>
<div class="t" style="top:475.7px;font-size:12.3px;left:1249.8px;color:#ececf2;transform-origin:0 50%;transform:translateY(-50%) scaleX(0.9365);">Search</div>
<svg style="left:1233.2px;top:521.6px;" width="11" height="11" viewBox="0 0 11 11" fill="none"><path d="M4.6 6.4 A2.3 2.3 0 0 0 7.9 6.4 L9.6 4.7 A2.3 2.3 0 0 0 6.3 1.4 L5.6 2.1 M6.4 4.6 A2.3 2.3 0 0 0 3.1 4.6 L1.4 6.3 A2.3 2.3 0 0 0 4.7 9.6 L5.4 8.9" stroke="#ececf2" stroke-width="1.15" stroke-linecap="round"/></svg>
<div class="t" style="top:527.7px;font-size:12.3px;left:1249.8px;color:#ececf2;transform-origin:0 50%;transform:translateY(-50%) scaleX(0.9931);">To / Links</div>
<svg style="left:1234.4px;top:547.8px;" width="9" height="11.4" viewBox="0 0 9 11.4" fill="none"><path d="M.8 1.8 A1 1 0 0 1 1.8 .8 H7.2 A1 1 0 0 1 8.2 1.8 V10.4 L4.5 7.8 L.8 10.4 Z" stroke="#ececf2" stroke-width="1.15" stroke-linejoin="round"/></svg>
<div class="t" style="top:554px;font-size:12.3px;left:1249.8px;color:#ececf2;letter-spacing:0.170px;">Next</div>
<div class="t" style="top:602.3px;font-size:10px;left:1233.9px;color:#efeff5;font-weight:700;transform-origin:0 50%;transform:translateY(-50%) scaleX(0.9559);">SPACES</div>
<svg style="left:1358.6px;top:594.4px;" width="14" height="13" viewBox="0 0 14 13" fill="none"><path d="M3.2 1 V11 M.8 8.6 L3.2 11.2 L5.6 8.6" stroke="#e0507a" stroke-width="1.3" stroke-linecap="round" stroke-linejoin="round"/><path d="M8.6 5.4 V2.4 A1.7 1.7 0 0 1 12 2.4 V5.4 M8.6 3.8 H12 M8.8 7.8 H12 L8.8 12 H12.2" stroke="#e0507a" stroke-width="1.15" stroke-linejoin="round" stroke-linecap="round"/></svg>
<svg style="left:1383.8px;top:594.1px;" width="11" height="11" viewBox="0 0 11 11" fill="none"><path d="M5.5 .6 V10.4 M.6 5.5 H10.4" stroke="#e0507a" stroke-width="1.3" stroke-linecap="round"/></svg>
<svg style="left:1232.6px;top:625.3px;" width="12.4" height="12" viewBox="0 0 12.4 12" fill="none"><path d="M6.2 .9 L7.8 4.5 L11.6 4.9 L8.7 7.4 L9.6 11.2 L6.2 9.2 L2.8 11.2 L3.7 7.4 L.8 4.9 L4.6 4.5 Z" stroke="#ececf2" stroke-width="1.15" stroke-linejoin="round"/></svg>
<div class="t" style="top:631.5px;font-size:12.3px;left:1249.6px;color:#ececf2;transform-origin:0 50%;transform:translateY(-50%) scaleX(0.9893);">Starred Collections</div>
<svg style="left:1234px;top:652.6px;" width="9.6" height="12" viewBox="0 0 9.6 12" fill="none"><rect x=".7" y="4.8" width="8.2" height="6.5" rx="1.3" stroke="#ececf2" stroke-width="1.15"/><path d="M2.5 4.8 V3 A2.3 2.3 0 0 1 7.1 3 V4.8" stroke="#ececf2" stroke-width="1.15"/><circle cx="4.8" cy="8" r=".8" fill="#ececf2"/></svg>
<div class="t" style="top:659.1px;font-size:12.3px;left:1249.6px;color:#ececf2;transform-origin:0 50%;transform:translateY(-50%) scaleX(0.9828);">My Collections</div>
<svg style="left:1232.6px;top:680.6px;" width="13" height="12" viewBox="0 0 13 12" fill="none"><circle cx="4.8" cy="3.4" r="2.5" stroke="#e0507a" stroke-width="1.2"/><path d="M.7 11.2 V10 A3.2 3.2 0 0 1 3.9 6.8 H5.7 A3.2 3.2 0 0 1 8.9 10 V11.2 M8.6 1 A2.5 2.5 0 0 1 8.6 5.8 M10.4 7 A3.2 3.2 0 0 1 12.3 10 V11.2" stroke="#e0507a" stroke-width="1.2" stroke-linecap="round"/></svg>
<div class="t" style="top:686.5px;font-size:12.3px;left:1249.6px;color:#e0507a;font-weight:700;transform-origin:0 50%;transform:translateY(-50%) scaleX(0.9814);">Company</div>
<div class="a" style="left:1232.2px;top:732.4px;width:166.3px;height:26.8px;border:1px solid #403f4f;border-radius:3px;"></div>
<svg style="left:1268.5px;top:740px;" width="11" height="11" viewBox="0 0 11 11" fill="none"><path d="M10.4 .6 C7.4 .4 4.8 2.2 3.4 5.2 L5.8 7.6 C8.8 6.2 10.6 3.6 10.4 .6 Z" fill="#e8e6ee"/><path d="M3.4 5.2 L1.2 5.6 L2.8 3.6 Z M5.8 7.6 L5.4 9.8 L7.4 8.2 Z" fill="#e0446a"/><path d="M.8 10.2 L2.6 7.4 L3.6 8.4 Z" fill="#f0a040"/><circle cx="7.6" cy="3.4" r="1" fill="#5a8ad0"/></svg>
<div class="t" style="top:745.2px;font-size:12.3px;left:1291.3px;color:#ececf2;transform-origin:0 50%;transform:translateY(-50%) scaleX(0.9613);">Upgrade plan</div>
<svg style="left:1233.4px;top:788.2px;" width="12" height="12" viewBox="0 0 12 12" fill="none"><circle cx="4.6" cy="3.2" r="2.4" stroke="#ececf2" stroke-width="1.15"/><path d="M.7 11 V10 A3.3 3.3 0 0 1 4 6.7 H5.4 M9 7.2 V11 M7.1 9.1 H10.9" stroke="#ececf2" stroke-width="1.15" stroke-linecap="round"/></svg>
<div class="t" style="top:794px;font-size:10.8px;left:1249.6px;color:#ececf2;transform-origin:0 50%;transform:translateY(-50%) scaleX(0.9861);">Invite members</div>
<svg style="left:1232.6px;top:813.2px;" width="13" height="13" viewBox="0 0 13 13" fill="none"><path d="M11.65 5.60 L11.65 7.00 L10.44 7.07 L9.77 8.68 L10.58 9.59 L9.59 10.58 L8.68 9.77 L7.07 10.44 L7.00 11.65 L5.60 11.65 L5.53 10.44 L3.92 9.77 L3.01 10.58 L2.02 9.59 L2.83 8.68 L2.16 7.07 L0.95 7.00 L0.95 5.60 L2.16 5.53 L2.83 3.92 L2.02 3.01 L3.01 2.02 L3.92 2.83 L5.53 2.16 L5.60 0.95 L7.00 0.95 L7.07 2.16 L8.68 2.83 L9.59 2.02 L10.58 3.01 L9.77 3.92 L10.44 5.53 Z" stroke="#ececf2" stroke-width="1.1" stroke-linejoin="round"/><circle cx="6.3" cy="6.3" r="1.782" stroke="#ececf2" stroke-width="1.1"/></svg>
<div class="t" style="top:819.3px;font-size:10.8px;left:1249.6px;color:#ececf2;transform-origin:0 50%;transform:translateY(-50%) scaleX(0.9728);">Organization settings</div>
<div class="t" style="top:428.2px;font-size:17px;left:1433.6px;color:#f2f2f6;transform-origin:0 50%;transform:translateY(-50%) scaleX(0.9332);">Company</div>
<div class="t" style="top:428.3px;font-size:10.8px;left:1517.6px;color:#5c5c6e;transform-origin:0 50%;transform:translateY(-50%) scaleX(0.9611);">| 7 collections</div>
<div class="a" style="left:1590.9px;top:420px;width:51px;height:17px;background:#1d1c27;"></div>
<div class="t" style="top:428px;font-size:10.2px;left:1590.9px;color:#f0f0f4;font-weight:700;transform-origin:0 50%;transform:translateY(-50%) scaleX(0.9919);">OPE...</div>
<svg style="left:1606.5px;top:423.6px;" width="8" height="8" viewBox="0 0 8 8" fill="none"><rect x=".5" y=".5" width="7" height="7" rx="1" stroke="#6e6e84" stroke-width="1"/><path d="M5.2 .5 V7.5" stroke="#6e6e84" stroke-width="1"/></svg>
<svg style="left:1434.7px;top:470.8px;" width="12" height="10" viewBox="0 0 12 10" fill="none"><path d="M.7 1 H11.3 M2.6 5 H11.3 M4.6 9 H11.3" stroke="#e0507a" stroke-width="1.3" stroke-linecap="round"/></svg>
<div class="t" style="top:476px;font-size:10.1px;left:1454.1px;color:#e0507a;transform-origin:0 50%;transform:translateY(-50%) scaleX(0.9475);-webkit-text-stroke:0.3px;">DRAG &amp; DROP</div>
<svg style="left:1531.1px;top:472.5px;" width="8.2" height="6.2" viewBox="0 0 8.2 6.2" fill="none"><path d="M1 1.55 L4.1 4.495 L7.2 1.55" stroke="#e0507a" stroke-width="1.3" stroke-linecap="round" stroke-linejoin="round"/></svg>
<svg style="left:1434.4px;top:498px;" width="12.4" height="12.4" viewBox="0 0 12.4 12.4" fill="none"><path d="M.8 1.6 A.8 .8 0 0 1 1.6 .8 H6 L11.4 6.2 A.9 .9 0 0 1 11.4 7.4 L7.4 11.4 A.9 .9 0 0 1 6.2 11.4 L.8 6 Z" stroke="#e0507a" stroke-width="1.2" stroke-linejoin="round"/><circle cx="3.6" cy="3.6" r=".9" fill="#e0507a"/></svg>
<div class="t" style="top:504.4px;font-size:10.1px;left:1454.1px;color:#e0507a;transform-origin:0 50%;transform:translateY(-50%) scaleX(0.9250);-webkit-text-stroke:0.3px;">TAG FILTER</div>
<svg style="left:1516px;top:500.9px;" width="8.2" height="6.2" viewBox="0 0 8.2 6.2" fill="none"><path d="M1 1.55 L4.1 4.495 L7.2 1.55" stroke="#e0507a" stroke-width="1.3" stroke-linecap="round" stroke-linejoin="round"/></svg>
<svg style="left:1434.7px;top:527.2px;" width="11.4" height="11.4" viewBox="0 0 11.4 11.4" fill="none"><rect x=".6" y=".6" width="4" height="4" rx="1" stroke="#e0507a" stroke-width="1.2"/><rect x="6.8" y=".6" width="4" height="4" rx="1" stroke="#e0507a" stroke-width="1.2"/><rect x=".6" y="6.8" width="4" height="4" rx="1" stroke="#e0507a" stroke-width="1.2"/><rect x="6.8" y="6.8" width="4" height="4" rx="1" stroke="#e0507a" stroke-width="1.2"/></svg>
<div class="t" style="top:533.2px;font-size:10.1px;left:1454.1px;color:#e0507a;transform-origin:0 50%;transform:translateY(-50%) scaleX(0.9104);-webkit-text-stroke:0.3px;">VIEW</div>
<svg style="left:1486.5px;top:529.7px;" width="8.2" height="6.2" viewBox="0 0 8.2 6.2" fill="none"><path d="M1 1.55 L4.1 4.495 L7.2 1.55" stroke="#e0507a" stroke-width="1.3" stroke-linecap="round" stroke-linejoin="round"/></svg>
<div class="t" style="top:561.4px;font-size:10.1px;left:1434px;color:#e0507a;transform-origin:0 50%;transform:translateY(-50%) scaleX(0.9611);-webkit-text-stroke:0.3px;">EXPAND</div>
<div class="t" style="top:561.4px;font-size:10.1px;left:1501.7px;color:#e0507a;transform-origin:0 50%;transform:translateY(-50%) scaleX(0.8981);-webkit-text-stroke:0.3px;">COLLAPSE</div>
<div class="t" style="top:628.4px;font-size:15.4px;left:1440.5px;color:#f2f2f6;transform-origin:0 50%;transform:translateY(-50%) scaleX(0.9415);">AI</div>
<svg style="left:1463.2px;top:624.1px;" width="11.4" height="9.4" viewBox="0 0 11.4 9.4" fill="none"><path d="M1 2.35 L5.7 6.815 L10.4 2.35" stroke="#e0507a" stroke-width="1.6" stroke-linecap="round" stroke-linejoin="round"/></svg>
<div class="a" style="left:1433.7px;top:701px;width:156.2px;height:83px;background:#49485b;border-radius:4px 0 0 4px;"></div>
<div class="a" style="left:1433.7px;top:751.7px;width:156.2px;height:1px;background:#687391;"></div>
<svg style="left:1445.6px;top:717.2px;" width="18" height="19" viewBox="0 0 18 19" fill="none"><rect x="2.6" y="4.6" width="12.8" height="10" rx="3.6" stroke="#3f8ef0" stroke-width="1.6"/><path d="M9 4.4 V1.6 M.8 8.4 V11.4 M17.2 8.4 V11.4 M6.4 17.4 H11.6" stroke="#3f8ef0" stroke-width="1.5" stroke-linecap="round"/><circle cx="9" cy="1.4" r="1" fill="#3f8ef0"/><circle cx="6.4" cy="9.4" r="1.25" fill="#3f8ef0"/><circle cx="11.6" cy="9.4" r="1.25" fill="#3f8ef0"/></svg>
<div class="t" style="left:1473px;top:727px;font-size:12.3px;color:#e6e6ee;letter-spacing:.12px;font-weight:500">SaleSmartly | 在線聊天</div>
<div class="t" style="left:1441.6px;top:768.5px;font-size:10px;color:#b6b6c6;letter-spacing:.05px;font-weight:500">SaleSmartly | 在線聊天</div>
<div class="a" style="left:1433.7px;top:801px;width:156.2px;height:45px;background:#49485b;border-radius:4px 0 0 0;"></div>
<div class="a" style="left:1444.6px;top:816.4px;width:20px;height:20px;background:#14141c;border-radius:2px;"></div>
<svg style="left:1444.6px;top:816.4px;" width="20" height="20" viewBox="0 0 18 18" fill="none"><path d="M3 3.4 H8.4 V7.6 H3 Z M9.6 3.4 H15 V7.6 H9.6 Z M3 9 H8.4 V13.6 H3 Z M9.6 9 H15 V13.6 H9.6 Z" stroke="#38a6c8" stroke-width="1.2"/><path d="M11.6 1.2 L5.6 9.6 H9.2 L6.2 16.8 L13 7.8 H9.4 Z" fill="#f2c61e"/></svg>
<div class="t" style="left:1473px;top:827px;font-size:12.3px;color:#e6e6ee;letter-spacing:-.06px;font-weight:500">pyTranscriber 影片自.</div>
<div class="a" style="left:1591px;top:449px;width:51px;height:391px;background:#1d1c27;"></div>
<div class="a" style="left:1598.4px;top:464.4px;width:29.5px;height:158.4px;border:1px solid #21202c;border-radius:4px;background:#1c1b26;"></div>
<div class="a" style="left:1598.4px;top:634.4px;width:29.5px;height:215px;border:1px solid #21202c;border-radius:4px;background:#1c1b26;"></div>
<div class="a" style="left:1599.4px;top:450px;width:35.6px;height:382px;overflow:hidden"><div class="a" style="left:-1599.4px;top:-450px;width:1710px;height:896px">
<div class="t" style="top:490.2px;font-size:10.6px;left:1609.4px;color:#e4e4ec;">Window</div>
<div class="t" style="top:505.2px;font-size:10.6px;left:1609.4px;color:#e4e4ec;">1</div>
<div class="t" style="top:527.8px;font-size:11.6px;left:1609.4px;color:#e4e4ec;">N</div>
<div class="t" style="top:541.6px;font-size:11.6px;left:1609.4px;color:#e4e4ec;">o</div>
<div class="t" style="top:555.7px;font-size:11.6px;left:1609.4px;color:#e4e4ec;">t</div>
<div class="t" style="top:569.8px;font-size:11.6px;left:1609.4px;color:#e4e4ec;">a</div>
<div class="t" style="top:583.9px;font-size:11.6px;left:1609.4px;color:#e4e4ec;">b</div>
<div class="t" style="top:598px;font-size:11.6px;left:1609.4px;color:#e4e4ec;">s</div>
<div class="t" style="top:654.8px;font-size:10.6px;left:1609.4px;color:#e4e4ec;">Window</div>
<div class="t" style="top:669.5px;font-size:10.6px;left:1609.4px;color:#e4e4ec;">2</div>
<div class="a" style="left:1609.6px;top:689px;width:17.1px;height:31.5px;background:#49485b;border-radius:3px;"></div>
<div class="a" style="left:1609.6px;top:732.8px;width:17.1px;height:31.5px;background:#49485b;border-radius:3px;"></div>
<div class="a" style="left:1609.6px;top:776.1px;width:17.1px;height:31.5px;background:#49485b;border-radius:3px;"></div>
<div class="a" style="left:1609.6px;top:819.5px;width:17.1px;height:31.5px;background:#49485b;border-radius:3px;"></div>
<div class="a" style="left:1618.8px;top:698.6px;width:12.4px;height:12.4px;border-radius:7px;background:#fff"></div>
<svg style="left:1620.6px;top:700.4px;" width="8.8" height="8.8" viewBox="0 0 8.8 8.8" fill="none"><path d="M8.4 3.7 H4.5 V5.3 H6.7 C6.4 6.4 5.6 7 4.5 7 A2.6 2.6 0 1 1 6.2 2.5 L7.4 1.3 A4.2 4.2 0 1 0 8.5 4.4 Z" fill="#4285f4"/><path d="M.9 2.4 L2.3 3.4 A2.6 2.6 0 0 1 6.2 2.5 L7.4 1.3 A4.2 4.2 0 0 0 .9 2.4 Z" fill="#ea4335"/><path d="M.9 2.4 A4.2 4.2 0 0 0 .9 6.4 L2.3 5.3 A2.6 2.6 0 0 1 2.3 3.4 Z" fill="#fbbc05"/><path d="M.9 6.4 A4.2 4.2 0 0 0 7.3 7.6 L6 6.5 A2.6 2.6 0 0 1 2.3 5.3 Z" fill="#34a853"/></svg>
<div class="a" style="left:1618.2px;top:743.3px;width:13.6px;height:9.6px;background:#e8365a;border-radius:2.8px;"></div>
<svg style="left:1623.2px;top:745.7px;" width="4.4" height="4.8" viewBox="0 0 4.4 4.8" fill="none"><path d="M.4 .2 L4.2 2.4 L.4 4.6 Z" fill="#fff"/></svg>
<div class="a" style="left:1618.2px;top:786.7px;width:13.6px;height:9.6px;background:#e8365a;border-radius:2.8px;"></div>
<svg style="left:1623.2px;top:789.1px;" width="4.4" height="4.8" viewBox="0 0 4.4 4.8" fill="none"><path d="M.4 .2 L4.2 2.4 L.4 4.6 Z" fill="#fff"/></svg>
<div class="a" style="left:1618.2px;top:830.2px;width:13.6px;height:9.6px;background:#e8365a;border-radius:2.8px;"></div>
<svg style="left:1623.2px;top:832.6px;" width="4.4" height="4.8" viewBox="0 0 4.4 4.8" fill="none"><path d="M.4 .2 L4.2 2.4 L.4 4.6 Z" fill="#fff"/></svg>
</div></div>
</div></div>
<div class="a" style="left:1164.3px;top:306.4px;width:477.3px;height:533px;border-radius:8px;box-shadow:inset 0 0 0 1px rgba(110,108,125,.38)"></div>
</div></body></html>
